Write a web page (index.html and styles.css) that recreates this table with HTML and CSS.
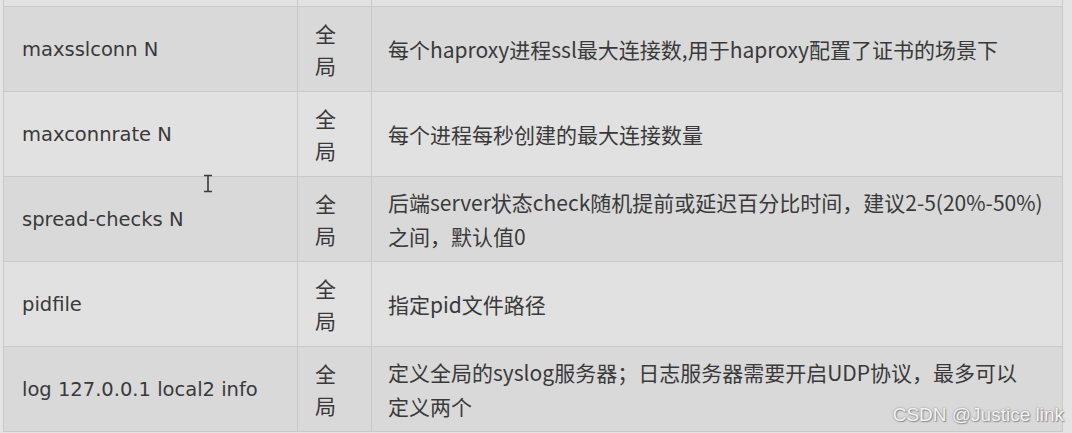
FILE: index.html
```html
<!DOCTYPE html>
<html lang="zh-CN">
<head>
  <meta charset="UTF-8" />
  <meta name="viewport" content="width=device-width, initial-scale=1.0" />
  <title>haproxy global 配置参数</title>
  <link rel="stylesheet" href="styles.css">
</head>
<body>
  <div class="sheet">
    <table class="params">
      <colgroup>
        <col class="c-name">
        <col class="c-scope">
        <col class="c-desc">
      </colgroup>
      <tr class="cut">
        <td></td><td></td><td></td>
      </tr>
      <tr class="odd">
        <td class="name">maxsslconn N</td>
        <td class="scope">全局</td>
        <td class="desc">每个haproxy进程ssl最大连接数,用于haproxy配置了证书的场景下</td>
      </tr>
      <tr class="even">
        <td class="name">maxconnrate N</td>
        <td class="scope">全局</td>
        <td class="desc">每个进程每秒创建的最大连接数量</td>
      </tr>
      <tr class="odd">
        <td class="name">spread-checks N</td>
        <td class="scope">全局</td>
        <td class="desc">后端server状态check随机提前或延迟百分比时间，建议2-5(20%-50%)<br>之间，默认值0</td>
      </tr>
      <tr class="even">
        <td class="name">pidfile</td>
        <td class="scope">全局</td>
        <td class="desc">指定pid文件路径</td>
      </tr>
      <tr class="odd">
        <td class="name">log 127.0.0.1 local2 info</td>
        <td class="scope">全局</td>
        <td class="desc">定义全局的syslog服务器；日志服务器需要开启UDP协议，最多可以<br>定义两个</td>
      </tr>
    </table>

    <!-- text cursor left on the recording -->
    <svg class="cursor" width="12" height="19" viewBox="0 0 12 19">
      <path d="M2 1.5h8M6 1.5v16M2 17.5h8" stroke="#3a3a3a" stroke-width="1.6" fill="none" />
    </svg>

    <div class="mark">CSDN @Justice link</div>
  </div>
</body>
</html>
```

FILE: styles.css
```css
body {
  margin: 0;
  background: #e4e4e4;
  font-family: "Noto Sans CJK SC", "Noto Sans", sans-serif;
  color: #393939;
}
.sheet {
  position: relative;
  height: 433px;
  overflow: hidden;
}
.params {
  margin-left: 3px;
  width: 1060px;
  border-collapse: collapse;
  table-layout: fixed;
}
.c-name {
  width: 294px;
}
.c-scope {
  width: 74px;
}
.params td {
  border: 1px solid #c9c9c9;
  padding: 0 17px;
  height: 84px;
  vertical-align: middle;
}
.params tr.cut td {
  height: 6px;
  border-top: none;
  background: #e2e2e2;
}
.odd td {
  background: #d9d9d9;
}
.even td {
  background: #e1e1e1;
}
.params td.name {
  font-family: "DejaVu Sans", sans-serif;
  font-size: 19.5px;
  padding-left: 18px;
}
.params td.scope {
  font-size: 21px;
  line-height: 32px;
}
.params td.desc {
  font-size: 21px;
  line-height: 34px;
  padding-left: 16px;
  padding-right: 0;
}
.cursor {
  position: absolute;
  left: 202px;
  top: 174px;
}
.mark {
  position: absolute;
  right: 8px;
  top: 404px;
  font-family: "Liberation Sans", Arial, sans-serif;
  font-size: 19px;
  color: #f4f4f4;
  text-shadow: 0 0 2px #7f7f7f, 1px 1px 1px #959595;
}
```
